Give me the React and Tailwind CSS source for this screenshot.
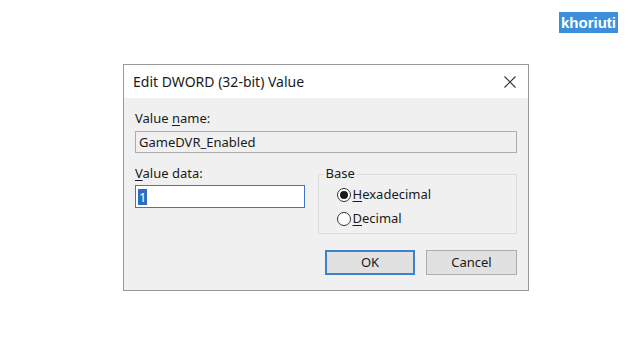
import React from 'react';

const font = { fontFamily: '"Noto Sans", "Open Sans", sans-serif' };

function Radio({ checked, label, accel }) {
  return (
    <div className="flex items-center gap-[2px] h-[18px]">
      <span className="w-[14px] h-[14px] rounded-full border border-[#333] bg-white flex items-center justify-center">
        {checked && <span className="w-[8px] h-[8px] rounded-full bg-[#1a1a1a]" />}
      </span>
      <span className="text-[13px] text-[#1a1a1a]">
        <span className="underline underline-offset-2">{accel}</span>{label}
      </span>
    </div>
  );
}

export default function App() {
  return (
    <div className="relative w-[640px] h-[360px] bg-white overflow-hidden" style={font}>
      <div className="absolute top-[12px] left-[559px] h-[21px] px-[2px] bg-[#3d8fdc] text-white font-bold text-[15px] leading-[21px]" style={{ fontFamily: '"Liberation Sans", Arial, sans-serif' }}>
        khoriuti
      </div>

      <div className="pt-[64px] pl-[123px]">
        <div className="w-[406px] h-[227px] border border-[#9a9a9a] flex flex-col">
          <div className="h-[33px] bg-white flex items-center justify-between pl-[9px] pr-[12px]">
            <span className="text-[14px] text-[#1a1a1a]">Edit DWORD (32-bit) Value</span>
            <svg width="12" height="12" viewBox="0 0 12 12" className="text-[#333]">
              <path d="M0.5 0.5 L11.5 11.5 M11.5 0.5 L0.5 11.5" stroke="currentColor" strokeWidth="1.1" />
            </svg>
          </div>
          <div className="flex-1 bg-[#f0f0f0] px-[11px] pt-[12px] text-[13px] text-[#1a1a1a]">
            <div className="leading-[16px]">
              Value <span className="underline underline-offset-2">n</span>ame:
            </div>
            <div className="mt-[5px] h-[22px] border border-[#adadad] bg-[#f0f0f0] flex items-center px-[3px] leading-none">
              GameDVR_Enabled
            </div>
            <div className="flex mt-[12px]">
              <div className="w-[183px]">
                <div className="leading-[16px]">
                  <span className="underline underline-offset-2">V</span>alue data:
                </div>
                <div className="mt-[4px] w-[170px] h-[23px] border border-[#3b79c4] bg-white flex items-center px-[2px]">
                  <span className="bg-[#2b6dc0] text-white px-[1px] leading-[16px]">1</span>
                </div>
              </div>
              <div className="relative w-[200px] h-[60px] mt-[9px] border border-[#dcdcdc] rounded-[2px] pl-[18px] pt-[11px] flex flex-col gap-[6px]">
                <span className="absolute -top-[10px] left-[5px] px-[2px] bg-[#f0f0f0] leading-[16px]">Base</span>
                <Radio checked accel="H" label="exadecimal" />
                <Radio accel="D" label="ecimal" />
              </div>
            </div>
            <div className="flex justify-end gap-[11px] mt-[16px]">
              <div className="w-[90px] h-[25px] border-2 border-[#3f82cc] bg-[#e1e1e1] flex items-center justify-center">OK</div>
              <div className="w-[91px] h-[25px] border border-[#adadad] bg-[#e1e1e1] flex items-center justify-center">Cancel</div>
            </div>
          </div>
        </div>
      </div>
    </div>
  );
}
